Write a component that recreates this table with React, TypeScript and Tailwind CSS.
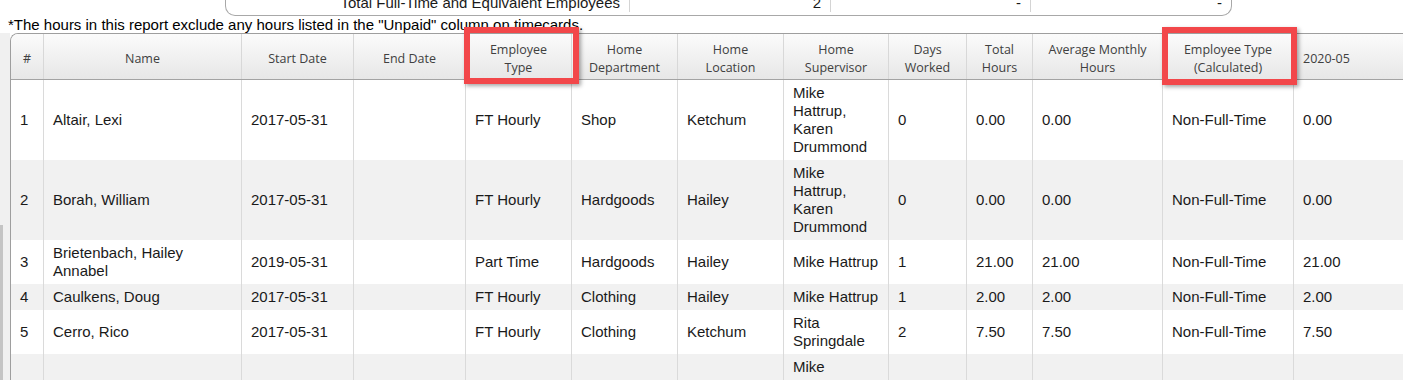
import React from "react";

const GRID =
  "grid grid-cols-[33px_198px_112px_112px_106px_106px_106px_105px_78px_66px_130px_131px_200px]";

const headers: string[][] = [
  ["#"],
  ["Name"],
  ["Start Date"],
  ["End Date"],
  ["Employee", "Type"],
  ["Home", "Department"],
  ["Home", "Location"],
  ["Home", "Supervisor"],
  ["Days", "Worked"],
  ["Total", "Hours"],
  ["Average Monthly", "Hours"],
  ["Employee Type", "(Calculated)"],
  ["2020-05"],
];

type Row = { h: string; cells: string[][] };

const rows: Row[] = [
  {
    h: "h-[80px]",
    cells: [
      ["1"],
      ["Altair, Lexi"],
      ["2017-05-31"],
      [""],
      ["FT Hourly"],
      ["Shop"],
      ["Ketchum"],
      ["Mike", "Hattrup,", "Karen", "Drummond"],
      ["0"],
      ["0.00"],
      ["0.00"],
      ["Non-Full-Time"],
      ["0.00"],
    ],
  },
  {
    h: "h-[80px]",
    cells: [
      ["2"],
      ["Borah, William"],
      ["2017-05-31"],
      [""],
      ["FT Hourly"],
      ["Hardgoods"],
      ["Hailey"],
      ["Mike", "Hattrup,", "Karen", "Drummond"],
      ["0"],
      ["0.00"],
      ["0.00"],
      ["Non-Full-Time"],
      ["0.00"],
    ],
  },
  {
    h: "h-[44px]",
    cells: [
      ["3"],
      ["Brietenbach, Hailey", "Annabel"],
      ["2019-05-31"],
      [""],
      ["Part Time"],
      ["Hardgoods"],
      ["Hailey"],
      ["Mike Hattrup"],
      ["1"],
      ["21.00"],
      ["21.00"],
      ["Non-Full-Time"],
      ["21.00"],
    ],
  },
  {
    h: "h-[26px]",
    cells: [
      ["4"],
      ["Caulkens, Doug"],
      ["2017-05-31"],
      [""],
      ["FT Hourly"],
      ["Clothing"],
      ["Hailey"],
      ["Mike Hattrup"],
      ["1"],
      ["2.00"],
      ["2.00"],
      ["Non-Full-Time"],
      ["2.00"],
    ],
  },
  {
    h: "h-[44px]",
    cells: [
      ["5"],
      ["Cerro, Rico"],
      ["2017-05-31"],
      [""],
      ["FT Hourly"],
      ["Clothing"],
      ["Ketchum"],
      ["Rita", "Springdale"],
      ["2"],
      ["7.50"],
      ["7.50"],
      ["Non-Full-Time"],
      ["7.50"],
    ],
  },
  {
    h: "h-[80px]",
    cells: [
      ["6"],
      ["Dalton, Grace"],
      ["2018-05-31"],
      [""],
      ["FT Hourly"],
      ["Shop"],
      ["Ketchum"],
      ["Mike", "Hattrup,", "Karen", "Drummond"],
      ["3"],
      ["24.00"],
      ["24.00"],
      ["Non-Full-Time"],
      ["24.00"],
    ],
  },
];

function Lines({ lines }: { lines: string[] }) {
  return (
    <div className="flex flex-col">
      {lines.map((l, i) => (
        <span key={i} className="whitespace-nowrap">
          {l}
        </span>
      ))}
    </div>
  );
}

export default function App() {
  return (
    <div className="relative w-[1403px] h-[380px] overflow-hidden bg-white font-['Liberation_Sans',Arial,sans-serif] text-[15px] text-[#1a1a1a]">
      {/* summary box */}
      <div className="-mt-[6px] ml-[225px] w-[1007px] border border-t-0 border-[#a8a8a8] rounded-b-[10px] bg-white pb-[3px]">
        <div className="grid grid-cols-[404px_201px_200px_1fr] h-[18px] leading-[18px]">
          <div className="text-right pr-[9px] border-r border-[#d4d4d4] whitespace-nowrap">
            Total Full-Time and Equivalent Employees
          </div>
          <div className="text-right pr-[9px] border-r border-[#d4d4d4]">2</div>
          <div className="text-right pr-[9px] border-r border-[#d4d4d4]">-</div>
          <div className="text-right pr-[9px]">-</div>
        </div>
      </div>

      {/* note */}
      <div className="pl-[8px] leading-[17px] text-black whitespace-nowrap">
        *The hours in this report exclude any hours listed in the "Unpaid" column on timecards.
      </div>

      {/* table area */}
      <div className="flex">
        <div className="w-[10px] shrink-0 bg-[#f0f0f0] flex flex-col">
          <div className="h-[192px]" />
          <div className="flex-1 w-[3px] bg-[#c4c4c4]" />
        </div>
        <div className="shrink-0 w-max border-l border-t border-[#9e9e9e] rounded-tl-[8px] overflow-hidden">
          {/* header */}
          <div
            className={`${GRID} h-[46px] border-b border-[#a3a3a3] bg-gradient-to-b from-[#fbfbfb] to-[#e7e7e7] font-['Open_Sans',sans-serif] text-[12.5px] leading-[18px] text-[#404040]`}
          >
            {headers.map((h, i) => (
              <div
                key={i}
                className={
                  i === headers.length - 1
                    ? "flex items-center pl-[9px] pt-[4px]"
                    : "flex items-center justify-center text-center border-r border-[#d8d8d8] pt-[4px]"
                }
              >
                <Lines lines={h} />
              </div>
            ))}
          </div>
          {/* body */}
          {rows.map((r, ri) => (
            <div
              key={ri}
              className={`${GRID} ${r.h} leading-[18px] ${ri % 2 === 1 ? "bg-[#f1f1f1]" : "bg-white"}`}
            >
              {r.cells.map((c, ci) => (
                <div
                  key={ci}
                  className={
                    ci === r.cells.length - 1
                      ? "flex items-center pl-[9px] py-[4px]"
                      : "flex items-center pl-[9px] py-[4px] border-r border-[#dadada]"
                  }
                >
                  <Lines lines={c} />
                </div>
              ))}
            </div>
          ))}
        </div>
      </div>

      {/* highlight boxes */}
      <div className="absolute left-[464px] top-[27px] w-[115px] h-[57px] border-[6px] border-[#f2474a] shadow-[2px_2px_4px_rgba(0,0,0,0.35)]" />
      <div className="absolute left-[1162px] top-[27px] w-[135px] h-[58px] border-[6px] border-[#f2474a] shadow-[2px_2px_4px_rgba(0,0,0,0.35)]" />
    </div>
  );
}
